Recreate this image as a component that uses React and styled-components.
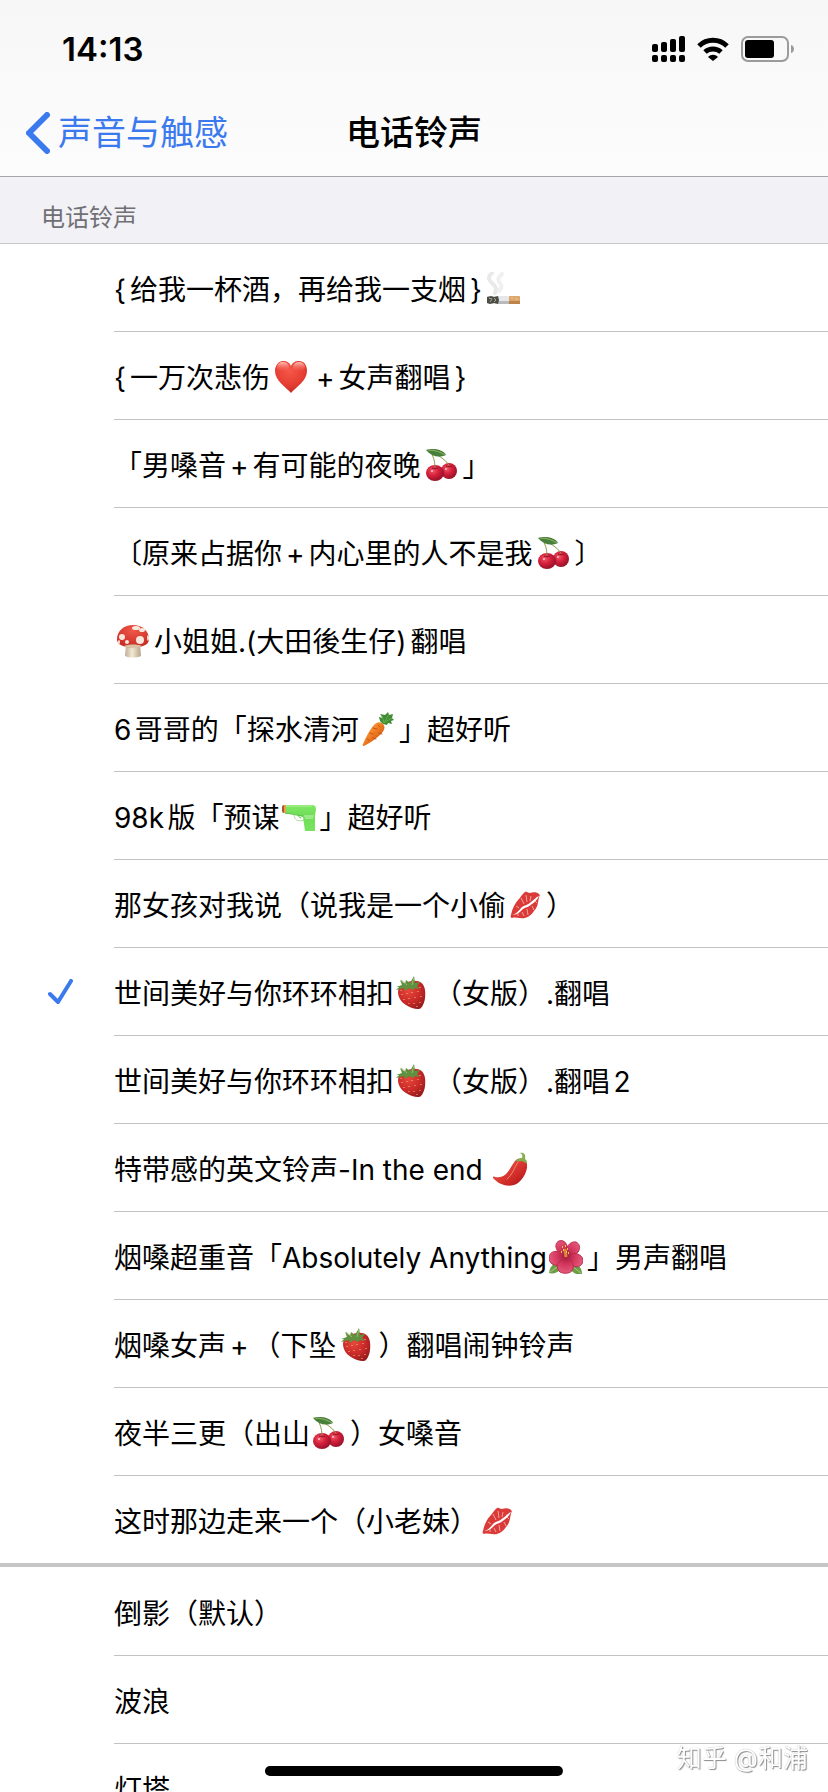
import React, { useState } from "react";
import styled, { createGlobalStyle } from "styled-components";

const GlobalStyle = createGlobalStyle`
  * {
    box-sizing: border-box;
  }

  body {
    margin: 0;
    background: #ffffff;
    color: #000000;
    font-family: Inter, "Noto Sans CJK SC", sans-serif;
  }
`;

const Screen = styled.div`
  height: 100vh;
  overflow: hidden;
`;

const TopBar = styled.header`
  background: linear-gradient(#f7f7f8, #fcfcfd);
  border-bottom: 1px solid #a6a6ab;
`;

const StatusBar = styled.div`
  display: flex;
  align-items: center;
  justify-content: space-between;
  height: 88px;
  padding: 10px 34px 0 62px;
`;

const Clock = styled.time`
  font-size: 33px;
  font-weight: 600;
  line-height: 40px;
`;

const StatusIcons = styled.div`
  display: flex;
  align-items: center;
  gap: 12px;
`;

const NavBar = styled.nav`
  display: grid;
  grid-template-columns: 1fr auto 1fr;
  align-items: center;
  height: 88px;
  padding: 2px 26px 0;
`;

const BackLink = styled.a`
  display: flex;
  align-items: center;
  gap: 8px;
  color: #3b79ee;
  font-size: 34px;
  line-height: 44px;
  text-decoration: none;
`;

const NavTitle = styled.h1`
  margin: 0;
  font-size: 34px;
  font-weight: 500;
  line-height: 44px;
`;

const SectionTitle = styled.h2`
  display: flex;
  align-items: flex-end;
  height: 67px;
  margin: 0;
  padding: 0 41px 8px;
  border-bottom: 1px solid #c8c7cc;
  background: #f2f1f6;
  color: #6f6f74;
  font-size: 24px;
  font-weight: 400;
  line-height: 34px;
`;

const ToneList = styled.div`
  padding-top: ${({ $divided }) => ($divided ? "1px" : "0")};
  border-top: ${({ $divided }) => ($divided ? "4px solid #c6c6c6" : "none")};
`;

const Row = styled.label`
  display: grid;
  grid-template-columns: 114px 1fr;
  height: 88px;
  cursor: pointer;

  &:last-child {
    height: 87px;
  }
`;

const CheckCell = styled.span`
  display: grid;
  align-items: center;
  padding-left: 48px;
`;

const ToneInput = styled.input`
  grid-area: 1 / 1;
  appearance: none;
  width: 26px;
  height: 26px;
  margin: 0;
`;

const CheckMark = styled.svg`
  grid-area: 1 / 1;
`;

const ToneName = styled.span`
  display: flex;
  align-items: center;
  padding-top: 4px;
  border-bottom: 1px solid #c3c3c5;
  font-size: 28px;
  line-height: 40px;
  white-space: nowrap;
  text-autospace: normal;

  ${Row}:last-child & {
    border-bottom: none;
  }
`;

const EmojiIcon = styled.svg`
  width: 34px;
  height: 34px;
  margin: 0 4px;
  vertical-align: -6px;

  &:first-child {
    margin-left: 2px;
  }
`;

const Mark = styled.span`
  margin-left: ${({ $before }) => ($before ? "4px" : "0")};
  margin-right: ${({ $after }) => ($after ? "4px" : "0")};
`;

const HomeIndicator = styled.div`
  position: fixed;
  bottom: 16px;
  left: 50%;
  width: 36%;
  height: 10px;
  border-radius: 5px;
  background: #000000;
  transform: translateX(-50%);
`;

const Watermark = styled.div`
  position: fixed;
  right: 20px;
  bottom: 16px;
  color: #ffffff;
  font-size: 25px;
  line-height: 36px;
  text-shadow: 1px 1px 1px #8c8c8c, 0 0 1px #a8a8a8;
`;

const Cigarette = () => (
  <>
    <path d="M6 1C0 6 4 9 7 12s4 5 2 9" fill="none" stroke="#e9e9e9" strokeWidth="4" strokeLinecap="round" />
    <path d="M16 2c-5 4-4 7-2 9s2 5-1 8" fill="none" stroke="#f0f0f0" strokeWidth="4" strokeLinecap="round" />
    <rect x="1" y="24" width="33" height="8" rx="1" fill="#e6e7e9" />
    <rect x="12" y="29" width="11" height="3" fill="#b9babd" />
    <path d="M1 25l4-1 3 1 4-1 1 4-1 4-4-1-4 1-3-1z" fill="#4b4d45" />
    <path d="M3 26l3 1-2 3M8 26l2 2-2 2" fill="none" stroke="#a8a99d" strokeWidth="1" />
    <rect x="23" y="24" width="11" height="8" rx="1" fill="#dca66c" />
    <rect x="23" y="29" width="11" height="3" fill="#bd8349" />
    <path d="M25 26h2M29 27h3" stroke="#f3c896" />
  </>
);

const Heart = () => (
  <>
    <defs>
      <radialGradient id="heartFill" cx="45%" cy="30%" r="65%">
        <stop offset="0" stopColor="#f4584a" />
        <stop offset="0.7" stopColor="#e63d31" />
        <stop offset="1" stopColor="#ca3028" />
      </radialGradient>
      <linearGradient id="heartShine" x1="0" x2="0" y1="0" y2="1">
        <stop offset="0" stopColor="#ffc4b8" />
        <stop offset="1" stopColor="#f4584a" stopOpacity="0" />
      </linearGradient>
    </defs>
    <path d="M17 33C12 27 1 21 1 11 1 5 5 1 9 1c4 0 7 2 8 5 1-3 4-5 8-5 5 0 8 4 8 10 0 10-11 16-16 22z" fill="url(#heartFill)" />
    <ellipse cx="9" cy="7" rx="6" ry="5" fill="url(#heartShine)" />
    <ellipse cx="25" cy="7" rx="6" ry="5" fill="url(#heartShine)" />
  </>
);

const Cherry = () => (
  <>
    <defs>
      <radialGradient id="cherryFill" cx="38%" cy="35%" r="65%">
        <stop offset="0" stopColor="#f0586a" />
        <stop offset="0.5" stopColor="#d51f3b" />
        <stop offset="1" stopColor="#98122a" />
      </radialGradient>
    </defs>
    <ellipse cx="24" cy="23" rx="8" ry="8" fill="url(#cherryFill)" />
    <ellipse cx="10" cy="25" rx="9" ry="8" fill="url(#cherryFill)" />
    <path d="M5 3c3 4 5 10 5 16M6 4c7 3 14 7 18 13" fill="none" stroke="#8a9a4c" strokeWidth="1" strokeLinecap="round" />
    <path d="M1 2c6-2 17-1 20 5-7 3-14 2-20-5z" fill="#48803a" />
    <path d="M3 2c7 0 12 2 17 5" fill="none" stroke="#8fb56c" />
    <path d="M7 20c2 1 4 1 6 0M21 18c2 1 4 1 6 0" fill="none" stroke="#8d1026" />
    <circle cx="7" cy="23" r="1" fill="#ffc2c8" />
    <circle cx="21" cy="21" r="1" fill="#ffc2c8" />
  </>
);

const Mushroom = () => (
  <>
    <defs>
      <linearGradient id="mushroomStem" x1="0" x2="1">
        <stop offset="0" stopColor="#bfae94" />
        <stop offset="0.45" stopColor="#f3e9d4" />
        <stop offset="1" stopColor="#b5a389" />
      </linearGradient>
      <radialGradient id="mushroomCap" cx="50%" cy="25%" r="70%">
        <stop offset="0" stopColor="#ef5848" />
        <stop offset="1" stopColor="#c92e27" />
      </radialGradient>
    </defs>
    <path d="M10 20h14l1 12c-4 2-12 2-16 0z" fill="url(#mushroomStem)" />
    <path d="M1 15C1 7 8 1 17 1s16 6 16 14c0 4-3 6-6 7-6 2-14 2-20 0-3-1-6-3-6-7z" fill="url(#mushroomCap)" />
    <path d="M8 22c5-2 13-2 18 0-5 3-13 3-18 0z" fill="#d9c4a6" />
    <ellipse cx="20" cy="4" rx="4" ry="2" fill="#f9e7dc" />
    <circle cx="6" cy="13" r="3" fill="#f9e7dc" />
    <circle cx="24" cy="16" r="4" fill="#f9e7dc" />
    <circle cx="11" cy="18" r="2" fill="#f9e7dc" />
    <ellipse cx="26" cy="6" rx="3" ry="2" fill="#f9e7dc" />
    <ellipse cx="32" cy="14" rx="1" ry="3" fill="#f9e7dc" />
    <ellipse cx="3" cy="18" rx="1" ry="2" fill="#f9e7dc" />
  </>
);

const Carrot = () => (
  <>
    <defs>
      <linearGradient id="carrotFill" x1="0.2" y1="0.2" x2="0.8" y2="0.8">
        <stop offset="0" stopColor="#ff9c45" />
        <stop offset="0.5" stopColor="#f07a20" />
        <stop offset="1" stopColor="#c85515" />
      </linearGradient>
    </defs>
    <path d="M12 14c3-4 7-5 10-2 3 3 1 7-2 10C15 27 9 31 3 34c-1 0-2-1-1-2 3-7 6-13 10-18z" fill="url(#carrotFill)" />
    <path d="M22 12l-3-3-1-4 4 1-3-4 5 1 3-3 1 3 4-1-1 4 2 2-3 1 1 3-4-1-1 2z" fill="#3f8c34" />
    <path d="M21 4l2 7M28 2l-5 9M31 6l-7 4" stroke="#66ad4f" strokeWidth="1" />
    <path d="M12 16l4 1M17 13l2 2M18 21l3 1M9 21l3 1M12 26l3 1M6 27l2 1" stroke="#bf5519" strokeLinecap="round" />
  </>
);

const WaterGun = () => (
  <>
    <defs>
      <linearGradient id="gunFill" x1="0" x2="0" y1="0" y2="1">
        <stop offset="0" stopColor="#83e765" />
        <stop offset="0.4" stopColor="#6fdd58" />
        <stop offset="1" stopColor="#79e45f" />
      </linearGradient>
    </defs>
    <path d="M12 14c0 6 4 8 10 6" fill="none" stroke="#a9df95" strokeWidth="1" />
    <path d="M17 14c-1 2 0 4 2 4" fill="none" stroke="#5bbf4b" strokeWidth="1" />
    <path d="M3 5h27c3 0 4 2 4 4 0 3-1 4-1 6v16H23l-2-14-4-1-5-2H3z" fill="url(#gunFill)" />
    <path d="M4 6h26" stroke="#b0f59a" />
    <path d="M22 16h10M23 18h8" stroke="#c5f5b8" />
    <path d="M4 13c5 1 10 2 17 3" fill="none" stroke="#5cc44d" />
    <rect x="0" y="5" width="4" height="8" rx="2" fill="#a8562c" />
    <rect x="2" y="5" width="2" height="8" fill="#e3a04d" />
  </>
);

const Lips = () => (
  <>
    <path d="M3 27c1-6 4-12 8-16 2-2 3-5 6-7 2-1 3 1 5 1 3-1 7-1 9 1 1 1 1 2 0 3-1 5-1 10-5 14-4 6-9 8-14 7-3 0-5-1-8 0-1 0-2-2-1-3z" fill="#da3a38" />
    <path d="M4 27c5-1 7-5 10-8 3-2 6-2 9-5 3-2 5-5 8-6-2 4-4 6-7 8-3 3-6 3-9 5-3 3-6 6-11 6z" fill="#ffffff" />
    <path d="M13 10l3 6M18 7l1 7M23 8l-1 5M8 18l3 2M14 24l2 4M19 21l1 6M24 18l2 4M10 25v3M27 13l2 2" stroke="#f3a39e" strokeWidth="1" />
  </>
);

const Strawberry = () => (
  <>
    <defs>
      <radialGradient id="berryFill" cx="40%" cy="35%" r="70%">
        <stop offset="0" stopColor="#e8473b" />
        <stop offset="0.6" stopColor="#c92a29" />
        <stop offset="1" stopColor="#961b1d" />
      </radialGradient>
    </defs>
    <path d="M2 16c0-6 7-10 14-11 7-1 12 2 13 9 1 8-1 15-4 18-2 2-9 1-15-3-5-3-8-8-8-13z" fill="url(#berryFill)" />
    <path d="M0 11l6-2-2-5 5 4 1-4 4 3 4-7 1 7 5-1-3 4 3 3-5-1-2 2-4-2-4 3-1-3-8 2 3-3z" fill="#5f9140" />
    <path d="M5 4l6 5M18 1l-2 8" stroke="#97bd6c" />
    <path d="M6 18v1M11 17v1M16 16v1M22 15v1M8 23v1M13 22v1M19 21v1M25 20v1M13 27v1M18 27v1M24 26v1M21 30v1M5 14v1M24 11v1" stroke="#f4c179" strokeWidth="1" />
  </>
);

const Pepper = () => (
  <>
    <defs>
      <linearGradient id="pepperFill" x1="0" y1="0" x2="1" y2="1">
        <stop offset="0.3" stopColor="#e64a3d" />
        <stop offset="0.7" stopColor="#cb2725" />
        <stop offset="1" stopColor="#8f1619" />
      </linearGradient>
    </defs>
    <path d="M22 9c3-4 10-3 12 2 1 7-3 15-9 20-7 5-18 3-25-5 0-1 0-2 2-1 12 2 14-8 20-16z" fill="url(#pepperFill)" />
    <path d="M25 10c-4 6-5 12-11 17" fill="none" stroke="#f08577" strokeWidth="1" strokeLinecap="round" />
    <path d="M23 9c2-3 5-3 6-3 1-3 0-4-2-5 4-1 6 2 5 6 2 1 2 3 2 5-2-2-4-2-5-3-2 1-4 0-6 0z" fill="#86ae4f" />
  </>
);

const Hibiscus = () => (
  <>
    <defs>
      <radialGradient id="petalFill" gradientUnits="userSpaceOnUse" cx="17" cy="16" r="17">
        <stop offset="0" stopColor="#9d1837" />
        <stop offset="0.5" stopColor="#d3365d" />
        <stop offset="1" stopColor="#e35a7c" />
      </radialGradient>
    </defs>
    <path d="M0 33c1-6 3-9 10-11l1 8c-3 3-7 4-11 3zM33 34c0-6-3-9-9-11l-2 7c3 4 7 5 11 4z" fill="#6a9e48" />
    <path d="M1 32l9-6M32 33l-8-6" stroke="#a7cb7d" />
    <path d="M16 17C7 13 4 4 10 1c6-2 10 4 8 15z" fill="url(#petalFill)" stroke="#b92a4e" />
    <path d="M16 17c0-10 5-16 11-15 6 3 5 12-7 16z" fill="url(#petalFill)" stroke="#b92a4e" />
    <path d="M17 16c8-5 16-2 17 4 0 8-10 10-17 0z" fill="url(#petalFill)" stroke="#b92a4e" />
    <path d="M18 17C9 8 0 11 0 18c0 8 12 11 18 1z" fill="url(#petalFill)" stroke="#b92a4e" />
    <path d="M17 17c-9 4-11 11-6 15 4 2 11 2 13-3 1-6-2-9-7-12z" fill="url(#petalFill)" stroke="#b92a4e" />
    <path d="M17 17l-1-8" stroke="#d98a36" strokeWidth="3" />
    <path d="M13 7h1M16 6h1M18 9h1M14 10h1M12 12h1M17 12h1M19 13h1" stroke="#f2c34c" strokeWidth="2" />
  </>
);

const emojiArt = {
  "🚬": { name: "香烟", Art: Cigarette },
  "❤️": { name: "红心", Art: Heart },
  "🍒": { name: "樱桃", Art: Cherry },
  "🍄": { name: "蘑菇", Art: Mushroom },
  "🥕": { name: "胡萝卜", Art: Carrot },
  "🔫": { name: "水枪", Art: WaterGun },
  "💋": { name: "唇印", Art: Lips },
  "🍓": { name: "草莓", Art: Strawberry },
  "🌶️": { name: "辣椒", Art: Pepper },
  "🌺": { name: "木槿花", Art: Hibiscus },
};

// ASCII marks that get some air where they touch Chinese characters
const marks = {
  "{": { after: true },
  "}": { before: true },
  "+": { before: true, after: true },
  ")": { after: true },
};

const tokenPattern = new RegExp(`(${Object.keys(emojiArt).join("|")}|[{}+)])`, "u");

const customTones = [
  "{给我一杯酒，再给我一支烟}🚬",
  "{一万次悲伤❤️+女声翻唱}",
  "「男嗓音+有可能的夜晚🍒」",
  "〔原来占据你+内心里的人不是我🍒〕",
  "🍄小姐姐.(大田後生仔)翻唱",
  "6哥哥的「探水清河🥕」超好听",
  "98k版「预谋🔫」超好听",
  "那女孩对我说（说我是一个小偷💋）",
  "世间美好与你环环相扣🍓（女版）.翻唱",
  "世间美好与你环环相扣🍓（女版）.翻唱2",
  "特带感的英文铃声-In the end 🌶️",
  "烟嗓超重音「Absolutely Anything🌺」男声翻唱",
  "烟嗓女声+（下坠🍓）翻唱闹钟铃声",
  "夜半三更（出山🍒）女嗓音",
  "这时那边走来一个（小老妹）💋",
];

const systemTones = ["倒影（默认）", "波浪", "灯塔"];

function ToneText({ text }) {
  return (
    <span>
      {text.split(tokenPattern).map((part, index) => {
        const emoji = emojiArt[part];
        const mark = marks[part];
        if (emoji) {
          return (
            <EmojiIcon key={index} viewBox="0 0 34 34" role="img" aria-label={emoji.name}>
              <emoji.Art />
            </EmojiIcon>
          );
        }
        if (mark) {
          return (
            <Mark key={index} $before={mark.before} $after={mark.after}>
              {part}
            </Mark>
          );
        }
        return part;
      })}
    </span>
  );
}

function Tones({ tones, selected, onSelect, divided }) {
  return (
    <ToneList $divided={divided}>
      {tones.map((tone) => (
        <Row key={tone}>
          <CheckCell>
            <ToneInput
              type="radio"
              name="ringtone"
              checked={selected === tone}
              onChange={() => onSelect(tone)}
            />
            {selected === tone && (
              <CheckMark width="26" height="26" viewBox="0 0 26 26" aria-hidden="true">
                <path d="M2 15l8 8L23 2" fill="none" stroke="#3b79ee" strokeWidth="4" strokeLinecap="round" strokeLinejoin="round" />
              </CheckMark>
            )}
          </CheckCell>
          <ToneName>
            <ToneText text={tone} />
          </ToneName>
        </Row>
      ))}
    </ToneList>
  );
}

function SignalIcon() {
  const tops = [8, 6, 3, 0];
  return (
    <svg width="33" height="26" viewBox="0 0 33 26" aria-hidden="true">
      {tops.map((top, i) => (
        <g key={i}>
          <rect x={i * 9} y={top} width="6" height={16 - top} rx="2" />
          <rect x={i * 9} y="19" width="6" height="7" rx="2" />
        </g>
      ))}
    </svg>
  );
}

function WifiIcon() {
  return (
    <svg width="32" height="26" viewBox="0 0 32 26" aria-hidden="true">
      <path d="M2 10a20 20 0 0 1 28 0M8 16a12 12 0 0 1 16 0" fill="none" stroke="#000" strokeWidth="5" />
      <path d="M16 25l-5-4c3-3 7-3 10 0z" />
    </svg>
  );
}

function BatteryIcon() {
  return (
    <svg width="53" height="26" viewBox="0 0 53 26" aria-hidden="true">
      <rect x="1" y="1" width="46" height="24" rx="6" fill="none" stroke="#9b9b9d" strokeWidth="2" />
      <rect x="4" y="4" width="29" height="18" rx="3" />
      <path d="M50 9c4 1 4 7 0 8z" fill="#9b9b9d" />
    </svg>
  );
}

function App() {
  const [selected, setSelected] = useState(customTones[8]);

  return (
    <Screen>
      <GlobalStyle />
      <TopBar>
        <StatusBar>
          <Clock>14:13</Clock>
          <StatusIcons>
            <SignalIcon />
            <WifiIcon />
            <BatteryIcon />
          </StatusIcons>
        </StatusBar>
        <NavBar>
          <BackLink href="#sounds">
            <svg width="24" height="42" viewBox="0 0 24 42" aria-hidden="true">
              <path d="M21 3L3 21l18 18" fill="none" stroke="currentColor" strokeWidth="6" strokeLinecap="round" strokeLinejoin="round" />
            </svg>
            声音与触感
          </BackLink>
          <NavTitle>电话铃声</NavTitle>
        </NavBar>
      </TopBar>
      <main>
        <SectionTitle>电话铃声</SectionTitle>
        <Tones tones={customTones} selected={selected} onSelect={setSelected} />
        <Tones tones={systemTones} selected={selected} onSelect={setSelected} divided />
      </main>
      <HomeIndicator />
      <Watermark>知乎 @和浦</Watermark>
    </Screen>
  );
}

export default App;
